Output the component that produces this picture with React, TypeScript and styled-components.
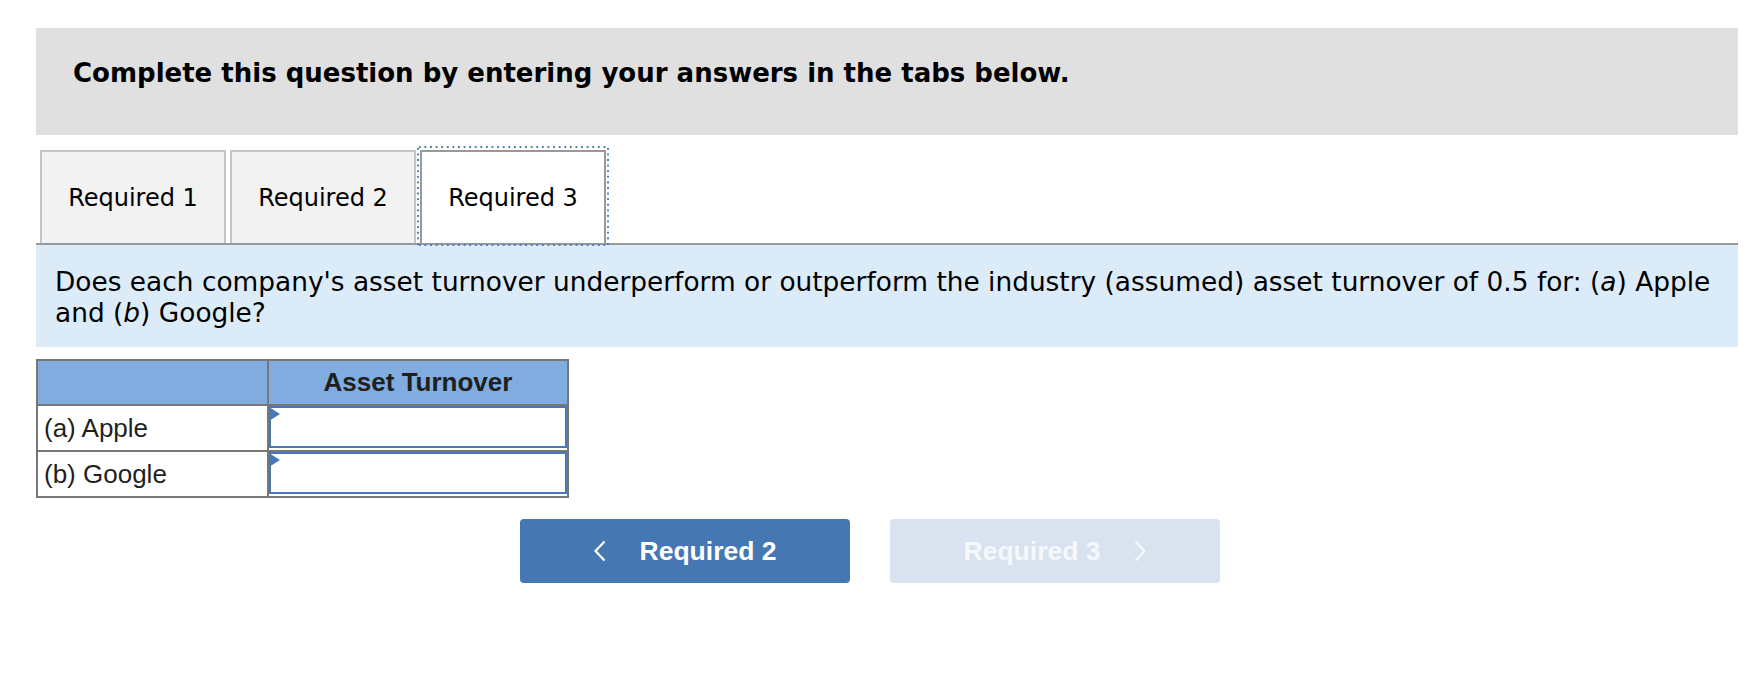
import React from "react";
import styled, { createGlobalStyle, css } from "styled-components";

const GlobalStyle = createGlobalStyle`
  html, body { margin: 0; padding: 0; background: #ffffff; }
  body { font-family: "DejaVu Sans", Verdana, sans-serif; color: #000; }
`;

const Page = styled.div`
  padding: 28px 18px 0 36px;
`;

const Banner = styled.div`
  background: #e0e0e0;
  padding: 30px 37px 47px;
  font-weight: bold;
  font-size: 26px;
  line-height: 30px;
`;

const TabBar = styled.div`
  display: flex;
  gap: 4px;
  margin-top: 15px;
  padding-left: 4px;
  border-bottom: 2px solid #999999;
`;

const dots = "radial-gradient(circle, #4a7cc0 1.1px, rgba(74,124,192,0) 1.5px)";

const Tab = styled.div<{ $active?: boolean }>`
  position: relative;
  box-sizing: border-box;
  width: 186px;
  height: 93px;
  display: flex;
  align-items: center;
  justify-content: center;
  font-size: 24px;
  border: 2px solid ${(p) => (p.$active ? "#999999" : "#c4c4c4")};
  border-bottom: 0;
  background: ${(p) => (p.$active ? "#ffffff" : "#f2f2f2")};
  ${(p) =>
    p.$active &&
    css`
      &::after {
        content: "";
        position: absolute;
        top: -6px;
        left: -5px;
        right: -5px;
        bottom: -3px;
        pointer-events: none;
        background:
          ${dots} left top / 5.6px 2.4px repeat-x,
          ${dots} left bottom / 5.6px 2.4px repeat-x,
          ${dots} left top / 2.4px 5.6px repeat-y,
          ${dots} right top / 2.4px 5.6px repeat-y;
      }
    `}
`;

const Question = styled.div`
  background: #dcebf8;
  padding: 21px 10px 19px 19px;
  font-size: 26.4px;
  line-height: 31px;
`;

const Table = styled.div`
  margin-top: 12px;
  display: grid;
  grid-template-columns: 229px 298px;
  grid-template-rows: 43px 44px 44px;
  gap: 2px;
  padding: 2px;
  width: fit-content;
  background: #777777;
`;

const HeadCell = styled.div`
  background: #80ace0;
  display: flex;
  align-items: center;
  justify-content: center;
  font-family: "Liberation Sans", Arial, sans-serif;
  font-weight: bold;
  font-size: 26px;
  color: #1f1f1f;
`;

const LabelCell = styled.div`
  background: #ffffff;
  display: flex;
  align-items: center;
  padding-left: 6px;
  font-family: "Liberation Sans", Arial, sans-serif;
  font-size: 26px;
  color: #1f1f1f;
`;

const InputCell = styled.div`
  background: #ffffff;
  position: relative;
`;

const AnswerInput = styled.input`
  display: block;
  box-sizing: border-box;
  width: 100%;
  height: 42px;
  margin: 0;
  border: 2px solid #4a78b6;
  background: #ffffff;
  outline: none;
`;

const Marker = styled.span`
  position: absolute;
  left: 0;
  top: 1px;
  width: 0;
  height: 0;
  border-top: 7px solid transparent;
  border-bottom: 7px solid transparent;
  border-left: 11px solid #4a78b6;
`;

const NavRow = styled.div`
  margin-top: 21px;
  display: flex;
  justify-content: center;
  gap: 40px;
  padding-right: 34px;
`;

const NavButton = styled.button<{ $disabled?: boolean }>`
  width: 330px;
  height: 64px;
  border: 0;
  border-radius: 4px;
  padding: 0;
  display: flex;
  align-items: center;
  justify-content: center;
  gap: 34px;
  background: ${(p) => (p.$disabled ? "#d9e2ef" : "#4577b3")};
  color: ${(p) => (p.$disabled ? "#f6f8fc" : "#ffffff")};
  font-family: "Liberation Sans", Arial, sans-serif;
  font-weight: bold;
  font-size: 26.5px;
  cursor: ${(p) => (p.$disabled ? "default" : "pointer")};
`;

const Chevron = ({ dir }: { dir: "left" | "right" }) => (
  <svg width="12" height="22" viewBox="0 0 12 22" aria-hidden="true">
    <polyline
      points={dir === "left" ? "10.5,1.5 1.5,11 10.5,20.5" : "1.5,1.5 10.5,11 1.5,20.5"}
      fill="none"
      stroke="currentColor"
      strokeWidth="2.2"
    />
  </svg>
);

export default function App() {
  return (
    <>
      <GlobalStyle />
      <Page>
        <Banner>Complete this question by entering your answers in the tabs below.</Banner>
        <TabBar>
          <Tab>Required 1</Tab>
          <Tab>Required 2</Tab>
          <Tab $active>Required 3</Tab>
        </TabBar>
        <Question>
          Does each company's asset turnover underperform or outperform the industry (assumed) asset
          turnover of 0.5 for: (<i>a</i>) Apple and (<i>b</i>) Google?
        </Question>
        <Table>
          <HeadCell />
          <HeadCell>Asset Turnover</HeadCell>
          <LabelCell>(a) Apple</LabelCell>
          <InputCell>
            <AnswerInput type="text" />
            <Marker />
          </InputCell>
          <LabelCell>(b) Google</LabelCell>
          <InputCell>
            <AnswerInput type="text" />
            <Marker />
          </InputCell>
        </Table>
        <NavRow>
          <NavButton>
            <Chevron dir="left" />
            <span>Required 2</span>
          </NavButton>
          <NavButton $disabled>
            <span>Required 3</span>
            <Chevron dir="right" />
          </NavButton>
        </NavRow>
      </Page>
    </>
  );
}
